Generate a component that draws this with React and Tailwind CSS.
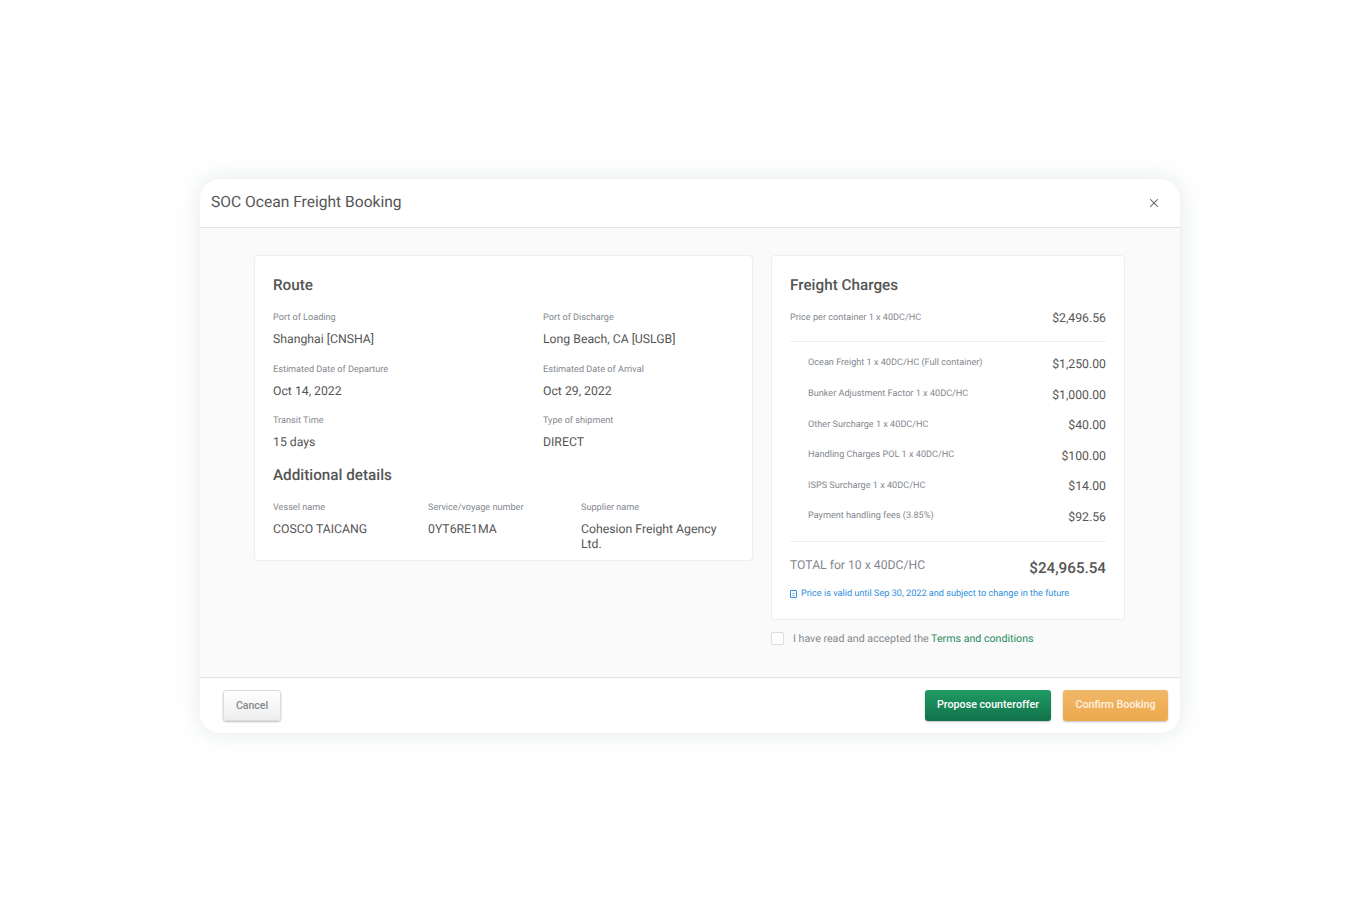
import { X } from "lucide-react";

const routeFields = [
  { label: "Port of Loading", value: "Shanghai [CNSHA]" },
  { label: "Port of Discharge", value: "Long Beach, CA [USLGB]" },
  { label: "Estimated Date of Departure", value: "Oct 14, 2022" },
  { label: "Estimated Date of Arrival", value: "Oct 29, 2022" },
  { label: "Transit Time", value: "15 days" },
  { label: "Type of shipment", value: "DIRECT" },
];

const charges = [
  { label: "Ocean Freight 1 x 40DC/HC (Full container)", amount: "$1,250.00" },
  { label: "Bunker Adjustment Factor 1 x 40DC/HC", amount: "$1,000.00" },
  { label: "Other Surcharge 1 x 40DC/HC", amount: "$40.00" },
  { label: "Handling Charges POL 1 x 40DC/HC", amount: "$100.00" },
  { label: "ISPS Surcharge 1 x 40DC/HC", amount: "$14.00" },
  { label: "Payment handling fees (3.85%)", amount: "$92.56" },
];

function Field({ label, value }) {
  return (
    <div>
      <div className="text-[9.15px] leading-[14px] text-[#84888e]">{label}</div>
      <div className="mt-[7px] text-[12.25px] leading-[15px] text-[#555555]">{value}</div>
    </div>
  );
}

function App() {
  return (
    <div className="min-h-screen bg-white flex items-center pl-[200px] font-['Roboto',sans-serif] [text-rendering:geometricPrecision]">
      <div className="w-[980px] h-[554px] mt-[2px] rounded-[20px] bg-white flex flex-col overflow-hidden shadow-[0_0_24px_rgba(176,196,196,0.35)]">
        <div className="h-[49px] shrink-0 border-b border-[#e3e3e3] flex items-center justify-between pl-[11px] pr-[19px]">
          <h1 className="text-[15.6px] text-[#555555]">SOC Ocean Freight Booking</h1>
          <X size={14} strokeWidth={1.8} className="text-[#555]" />
        </div>

        <div className="flex-1 bg-[#fafafa] flex items-start gap-[18px] pl-[54px] pr-[55px] pt-[27px]">
          <div className="w-[499px] h-[306px] shrink-0 bg-white border border-[#eeeeee] rounded-[4px] px-[18px] pt-[20px]">
            <h2 className="text-[15.25px] leading-[19px] font-medium text-[#555555]">Route</h2>
            <div className="mt-[16px] grid grid-cols-[270px_1fr] gap-y-[15.5px]">
              {routeFields.map((f) => (
                <Field key={f.label} label={f.label} value={f.value} />
              ))}
            </div>
            <h2 className="mt-[16px] text-[15.25px] leading-[19px] font-medium text-[#555555]">Additional details</h2>
            <div className="mt-[16px] grid grid-cols-[155px_153px_1fr]">
              <Field label="Vessel name" value="COSCO TAICANG" />
              <Field label="Service/voyage number" value="0YT6RE1MA" />
              <Field label="Supplier name" value="Cohesion Freight Agency Ltd." />
            </div>
          </div>

          <div className="w-[354px] shrink-0">
            <div className="h-[365px] bg-white border border-[#eeeeee] rounded-[4px] px-[18px] pt-[20px]">
              <h2 className="text-[15.25px] leading-[19px] font-medium text-[#555555]">Freight Charges</h2>
              <div className="mt-[16px] flex justify-between border-b border-[#eeeeee] h-[31px]">
                <span className="text-[9.15px] leading-[14px] text-[#84888e]">Price per container 1 x 40DC/HC</span>
                <span className="text-[12.25px] leading-[15px] text-[#555555]">$2,496.56</span>
              </div>
              <div className="pt-[7px] border-b border-[#eeeeee] pb-[8px]">
                {charges.map((c) => (
                  <div key={c.label} className="h-[30.6px] pl-[18px] flex items-center justify-between">
                    <span className="text-[9.15px] text-[#84888e]">{c.label}</span>
                    <span className="text-[12.25px] text-[#555555]">{c.amount}</span>
                  </div>
                ))}
              </div>
              <div className="mt-[14px] flex items-start justify-between">
                <span className="text-[12.2px] leading-[18px] text-[#84888e]">TOTAL for 10 x 40DC/HC</span>
                <span className="text-[15.2px] leading-[24px] font-medium text-[#555555]">$24,965.54</span>
              </div>
              <div className="mt-[7px] flex items-center gap-[4px] text-[9.15px] leading-[14px] text-[#2f8fdc]">
                <svg width="7" height="8" viewBox="0 0 7 8" fill="none" className="mt-[1px]">
                  <rect x="0.5" y="0.5" width="6" height="7" rx="0.5" stroke="#2f8fdc" />
                  <path d="M2.5 3.5h2M2.5 5.5h2" stroke="#2f8fdc" strokeWidth="0.8" />
                </svg>
                <span>Price is valid until Sep 30, 2022 and subject to change in the future</span>
              </div>
            </div>
            <label className="mt-[12px] flex items-center gap-[9px]">
              <span className="w-[13px] h-[13px] bg-white border border-[#dddddd] rounded-[2px] -mt-[2px]" />
              <span className="text-[10.65px] leading-[14px] text-[#84888e]">
                I have read and accepted the <span className="text-[#1f8a5a]">Terms and conditions</span>
              </span>
            </label>
          </div>
        </div>

        <div className="h-[56px] shrink-0 bg-white border-t border-[#e3e3e3] flex items-center justify-between pl-[23px] pr-[12px]">
          <button className="w-[58px] h-[31px] rounded-[3px] border border-[#dcdcdc] bg-gradient-to-b from-white to-[#eeeeee] text-[10.5px] font-medium text-[#84888e] shadow-[0_1px_2px_rgba(0,0,0,0.25)]">
            Cancel
          </button>
          <div className="flex gap-[12px]">
            <button className="w-[126px] h-[31px] rounded-[3px] bg-gradient-to-b from-[#1f9c64] to-[#12724a] text-[10.7px] font-medium text-white shadow-[0_1px_2px_rgba(0,0,0,0.25)]">
              Propose counteroffer
            </button>
            <button className="w-[105px] h-[31px] rounded-[3px] bg-gradient-to-b from-[#f0b869] to-[#eda84c] text-[10.7px] font-medium text-[#fdf3e2] shadow-[0_1px_2px_rgba(0,0,0,0.25)]">
              Confirm Booking
            </button>
          </div>
        </div>
      </div>
    </div>
  );
}

export default App;
